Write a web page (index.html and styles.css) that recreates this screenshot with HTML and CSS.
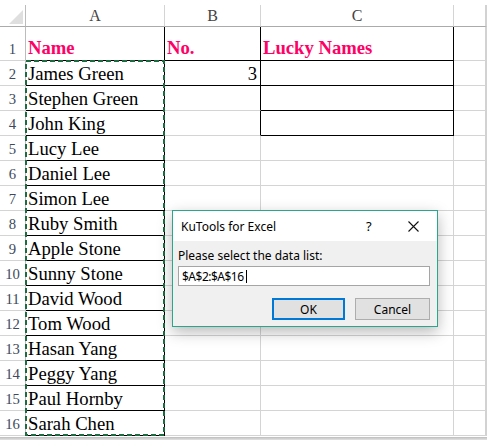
FILE: index.html
```html
<!DOCTYPE html>
<html lang="en">
<head>
  <meta charset="UTF-8">
  <title>Lucky Names</title>
  <link rel="stylesheet" href="styles.css">
</head>
<body>
  <div class="workbook">
    <div class="sheet">
      <!-- column headings -->
      <div class="hd corner"><span class="corner-tri"></span></div>
      <div class="hd">A</div>
      <div class="hd">B</div>
      <div class="hd">C</div>
      <div class="hd last"></div>

      <div class="rn">1</div>
      <div class="cell box title">Name</div>
      <div class="cell box title">No.</div>
      <div class="cell box title">Lucky Names</div>
      <div class="cell last"></div>

      <div class="rn">2</div>
      <div class="cell box">James Green</div>
      <div class="cell box num">3</div>
      <div class="cell box"></div>
      <div class="cell last"></div>

      <div class="rn">3</div>
      <div class="cell box">Stephen Green</div>
      <div class="cell edge"></div>
      <div class="cell box"></div>
      <div class="cell last"></div>

      <div class="rn">4</div>
      <div class="cell box">John King</div>
      <div class="cell edge"></div>
      <div class="cell box"></div>
      <div class="cell last"></div>

      <div class="rn">5</div>
      <div class="cell box">Lucy Lee</div>
      <div class="cell"></div><div class="cell"></div><div class="cell last"></div>

      <div class="rn">6</div>
      <div class="cell box">Daniel Lee</div>
      <div class="cell"></div><div class="cell"></div><div class="cell last"></div>

      <div class="rn">7</div>
      <div class="cell box">Simon Lee</div>
      <div class="cell"></div><div class="cell"></div><div class="cell last"></div>

      <div class="rn">8</div>
      <div class="cell box">Ruby Smith</div>
      <div class="cell"></div><div class="cell"></div><div class="cell last"></div>

      <div class="rn">9</div>
      <div class="cell box">Apple Stone</div>
      <div class="cell"></div><div class="cell"></div><div class="cell last"></div>

      <div class="rn">10</div>
      <div class="cell box">Sunny Stone</div>
      <div class="cell"></div><div class="cell"></div><div class="cell last"></div>

      <div class="rn">11</div>
      <div class="cell box">David Wood</div>
      <div class="cell"></div><div class="cell"></div><div class="cell last"></div>

      <div class="rn">12</div>
      <div class="cell box">Tom Wood</div>
      <div class="cell"></div><div class="cell"></div><div class="cell last"></div>

      <div class="rn">13</div>
      <div class="cell box">Hasan Yang</div>
      <div class="cell"></div><div class="cell"></div><div class="cell last"></div>

      <div class="rn">14</div>
      <div class="cell box">Peggy Yang</div>
      <div class="cell"></div><div class="cell"></div><div class="cell last"></div>

      <div class="rn">15</div>
      <div class="cell box">Paul Hornby</div>
      <div class="cell"></div><div class="cell"></div><div class="cell last"></div>

      <div class="rn">16</div>
      <div class="cell box">Sarah Chen</div>
      <div class="cell"></div><div class="cell"></div><div class="cell last"></div>
    </div>
    <div class="sheet-foot"></div>

    <!-- copy range A2:A16 -->
    <svg class="ants" width="140" height="376" viewBox="0 0 140 376">
      <rect x="1" y="1" width="138" height="374" fill="none" stroke="#1d6b40" stroke-width="2" stroke-dasharray="5 3"/>
    </svg>

    <div class="dialog">
      <div class="dialog-title">
        <span class="dialog-name">KuTools for Excel</span>
        <span class="dialog-help">?</span>
        <svg class="dialog-close" width="11" height="11" viewBox="0 0 11 11">
          <path d="M0.5 0.5 L10.5 10.5 M10.5 0.5 L0.5 10.5" stroke="#111" stroke-width="1.1" fill="none"/>
        </svg>
      </div>
      <div class="dialog-body">
        <label class="dialog-label" for="range">Please select the data list:</label>
        <div class="range-input" id="range">$A$2:$A$16<span class="caret"></span></div>
        <div class="dialog-buttons">
          <button class="btn btn-default">OK</button>
          <button class="btn">Cancel</button>
        </div>
      </div>
    </div>
  </div>
</body>
</html>
```

FILE: styles.css
```css
body {
  margin: 0;
  background: #ffffff;
  overflow: hidden;
}
.workbook {
  position: relative;
  width: 487px;
  height: 440px;
  padding-top: 5px;
  box-sizing: border-box;
}
.sheet {
  display: grid;
  grid-template-columns: 26px 139px 96px 193px 33px;
  grid-template-rows: 22px 34px repeat(15, 25px);
  font-family: "Liberation Serif", "Times New Roman", serif;
}
.sheet > div {
  box-sizing: border-box;
  border-right: 1px solid #d4d4d4;
  border-bottom: 1px solid #d4d4d4;
  overflow: hidden;
  white-space: nowrap;
}

/* headings */
.hd {
  display: flex;
  align-items: center;
  justify-content: center;
  padding-top: 1px;
  font-size: 16px;
  color: #444;
  border-bottom-color: #ababab !important;
}
.corner {
  position: relative;
  border-right-color: #bcbcbc !important;
}
.corner-tri {
  position: absolute;
  right: 2px;
  bottom: 2px;
  width: 0;
  height: 0;
  border-left: 14px solid transparent;
  border-bottom: 14px solid #dfdfdf;
}
.rn {
  display: flex;
  align-items: flex-end;
  justify-content: center;
  padding-bottom: 1px;
  font-size: 14.7px;
  line-height: 19px;
  color: #3e4a5c;
  border-right-color: #bcbcbc !important;
}
.sheet > .last {
  border-right: 2px solid #d2d2d2;
}

/* cells */
.cell {
  display: flex;
  align-items: flex-end;
  padding: 0 3px 1px 2px;
  font-size: 18.67px;
  line-height: 21px;
  color: #000;
}
.sheet > .box {
  border-right-color: #000;
  border-bottom-color: #000;
}
.sheet > .edge {
  border-right-color: #000;
}
.title {
  color: #ff0066;
  font-weight: bold;
  padding-bottom: 2px;
}
.num {
  justify-content: flex-end;
}
.sheet-foot {
  height: 3px;
  margin-top: 1px;
  background: linear-gradient(#bdbdbd, #e2e2e2);
}

.ants {
  position: absolute;
  left: 25px;
  top: 60px;
}

/* KuTools prompt */
.dialog {
  position: absolute;
  left: 172px;
  top: 210px;
  width: 266px;
  height: 117px;
  box-sizing: border-box;
  border: 1px solid #2aa68e;
  background: #f0f0f0;
  box-shadow: 0 5px 14px rgba(0, 0, 0, 0.28);
  font-family: "Noto Sans", "Open Sans", sans-serif;
  font-size: 12px;
  color: #000;
}
.dialog-title {
  display: flex;
  align-items: center;
  height: 30px;
  padding-left: 8px;
  background: #ffffff;
}
.dialog-name {
  flex: 1;
}
.dialog-help {
  width: 10px;
  margin-right: 32px;
  font-size: 13px;
}
.dialog-close {
  margin-right: 18px;
}
.dialog-body {
  padding: 6px 7px 0 5px;
}
.dialog-label {
  display: block;
  line-height: 17px;
}
.range-input {
  display: flex;
  align-items: center;
  height: 20px;
  margin-top: 2px;
  padding-left: 3px;
  box-sizing: border-box;
  border: 1px solid #a5a5a5;
  background: #ffffff;
  letter-spacing: -0.5px;
}
.caret {
  display: inline-block;
  width: 1px;
  height: 13px;
  margin-left: 2px;
  background: #000;
}
.dialog-buttons {
  display: flex;
  justify-content: flex-end;
  gap: 10px;
  margin-top: 12px;
}
.btn {
  width: 75px;
  height: 22px;
  padding: 0;
  border: 1px solid #adadad;
  background: #e1e1e1;
  font-family: inherit;
  font-size: 12px;
  color: #000;
}
.btn-default {
  width: 73px;
  border: 2px solid #0078d7;
}
```
